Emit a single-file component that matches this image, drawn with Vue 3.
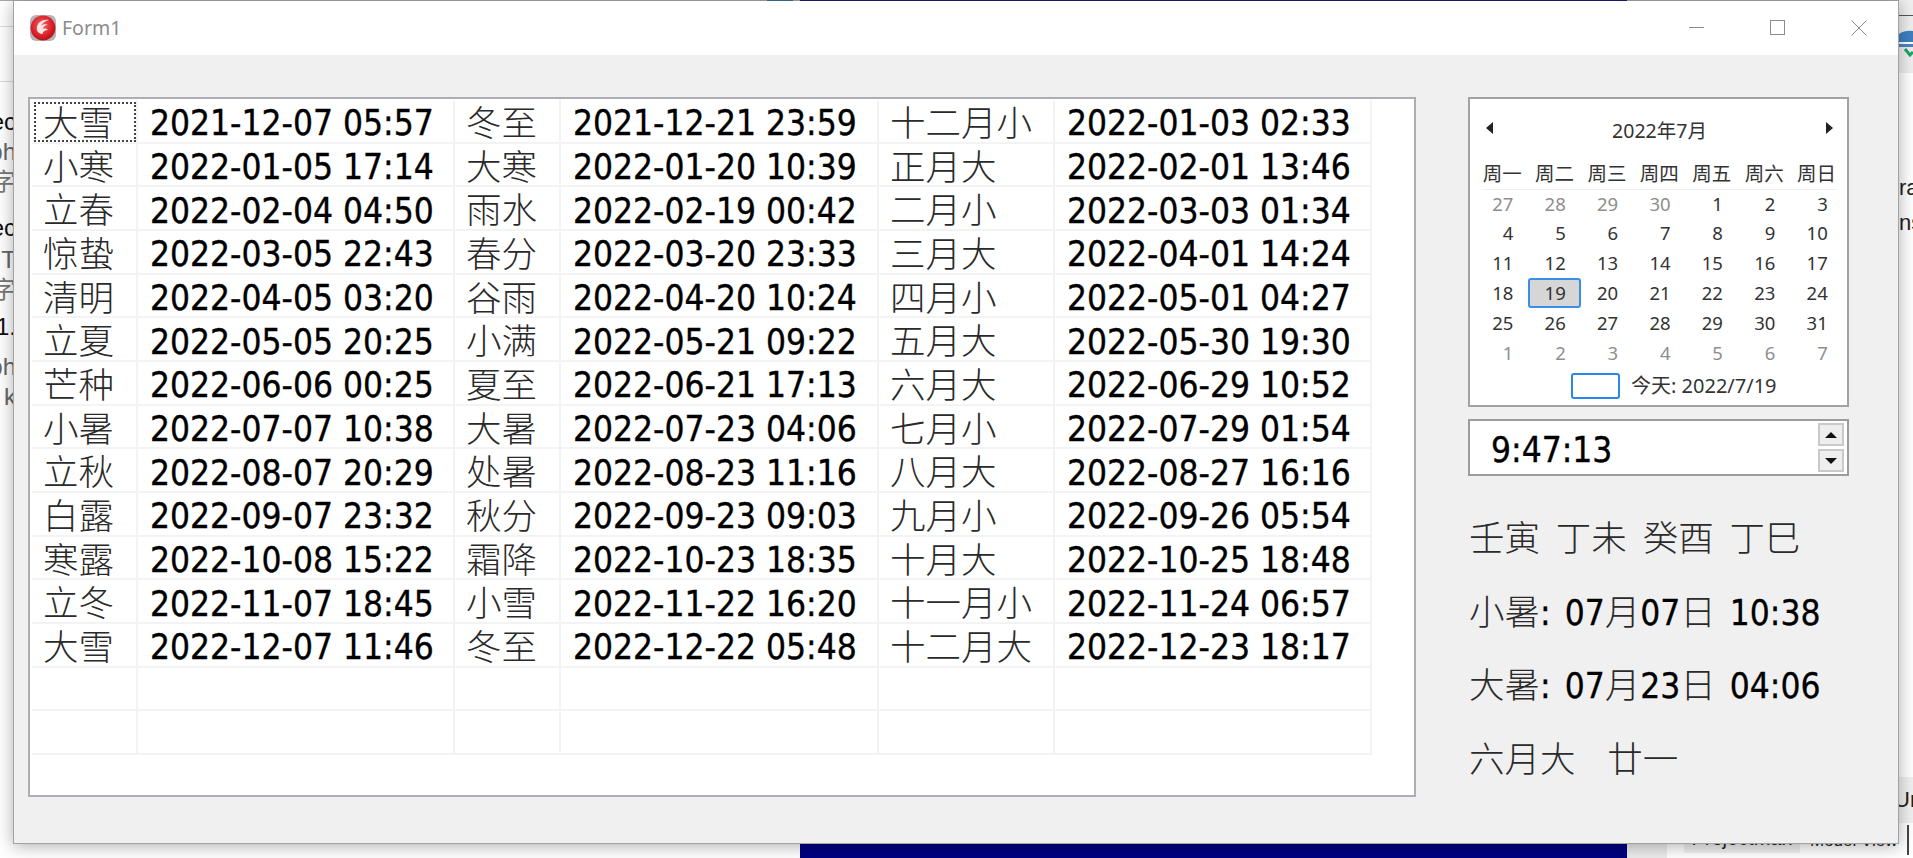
<script setup>
const rows = [
  ['大雪','2021-12-07 05:57','冬至','2021-12-21 23:59','十二月小','2022-01-03 02:33'],
  ['小寒','2022-01-05 17:14','大寒','2022-01-20 10:39','正月大','2022-02-01 13:46'],
  ['立春','2022-02-04 04:50','雨水','2022-02-19 00:42','二月小','2022-03-03 01:34'],
  ['惊蛰','2022-03-05 22:43','春分','2022-03-20 23:33','三月大','2022-04-01 14:24'],
  ['清明','2022-04-05 03:20','谷雨','2022-04-20 10:24','四月小','2022-05-01 04:27'],
  ['立夏','2022-05-05 20:25','小满','2022-05-21 09:22','五月大','2022-05-30 19:30'],
  ['芒种','2022-06-06 00:25','夏至','2022-06-21 17:13','六月大','2022-06-29 10:52'],
  ['小暑','2022-07-07 10:38','大暑','2022-07-23 04:06','七月小','2022-07-29 01:54'],
  ['立秋','2022-08-07 20:29','处暑','2022-08-23 11:16','八月大','2022-08-27 16:16'],
  ['白露','2022-09-07 23:32','秋分','2022-09-23 09:03','九月小','2022-09-26 05:54'],
  ['寒露','2022-10-08 15:22','霜降','2022-10-23 18:35','十月大','2022-10-25 18:48'],
  ['立冬','2022-11-07 18:45','小雪','2022-11-22 16:20','十一月小','2022-11-24 06:57'],
  ['大雪','2022-12-07 11:46','冬至','2022-12-22 05:48','十二月大','2022-12-23 18:17'],
  ['','','','','',''],
  ['','','','','',''],
]
const weekdays = ['周一','周二','周三','周四','周五','周六','周日']
const days = []
for (const d of [27,28,29,30]) days.push({ d, muted: true })
for (let d = 1; d <= 31; d++) days.push({ d, muted: false, sel: d === 19 })
for (let d = 1; d <= 7; d++) days.push({ d, muted: true })
const leftScraps = [
  { t: 'ec', y: 106, c: '#111' }, { t: 'ph', y: 136, c: '#666' }, { t: '字', y: 166, c: '#777' },
  { t: 'ec', y: 212, c: '#111' }, { t: 'NT', y: 244, c: '#666' }, { t: '字', y: 274, c: '#777' },
  { t: '1.', y: 311, c: '#111' }, { t: 'ph', y: 351, c: '#666' }, { t: 'k', y: 381, c: '#666' },
]
</script>

<template>
  <div class="desktop">
    <div class="top-strip">
      <span class="s-gray"></span><span class="s-blue"></span><span class="s-blue"></span><span class="s-gap"></span><span class="s-navy"></span><span class="s-rest"></span>
    </div>
    <div class="hair h1"></div>
    <div class="hair h2"></div>
    <span v-for="(s, i) in leftScraps" :key="i" class="scrap" :style="{ top: s.y + 'px', color: s.c }">{{ s.t }}</span>

    <div class="right-top">
      <svg class="right-icon" width="14" height="30" viewBox="0 0 14 30">
        <path d="M0 4 Q6 0 14 1 V12 H0 Z" fill="#3f7fc1"/>
        <rect x="0" y="12" width="14" height="2" fill="#fff"/>
        <path d="M0 14 H14 V17 H0 Z" fill="#4a86c4"/>
        <path d="M6 19 L11 25 L14 22" fill="none" stroke="#1fa36b" stroke-width="3"/>
      </svg>
    </div>
    <span class="rscrap ra">ra</span>
    <span class="rscrap ns">ns</span>
    <div class="right-bot"><span class="jn">Un</span></div>

    <div class="bottom-strip">
      <span class="b-navy"></span><span class="b-gray"></span><span class="b-proj">Projectman</span><span class="b-model">Model View</span><span class="b-bar"></span>
    </div>

    <div class="window">
      <header class="titlebar">
        <svg class="app-icon" width="26" height="26" viewBox="0 0 26 26">
          <defs>
            <radialGradient id="red" cx="45%" cy="40%" r="60%">
              <stop offset="0" stop-color="#f0686c"/>
              <stop offset="0.7" stop-color="#dc1f2a"/>
              <stop offset="1" stop-color="#b3131c"/>
            </radialGradient>
          </defs>
          <rect x="0" y="0" width="26" height="26" rx="6" fill="#b9b4b4"/>
          <circle cx="13" cy="13" r="12.4" fill="url(#red)"/>
          <path d="M7 12 C8 7 13 4 19 5 C15 6 12 8 11 11 C13 9 16 9 18 10 C15 10 13 12 13 14 C15 13 17 14 18 15 C15 15 13 16 12.5 19 C9 19 6 16 7 12 Z" fill="#fbe6e6"/>
        </svg>
        <span class="title">Form1</span>
        <div class="controls">
          <svg class="ctl" width="16" height="16" viewBox="0 0 16 16"><path d="M0 7.5 H15" stroke="#8c8c8c" fill="none"/></svg>
          <svg class="ctl" width="16" height="16" viewBox="0 0 16 16"><rect x="0.5" y="0.5" width="14" height="14" stroke="#8c8c8c" fill="none"/></svg>
          <svg class="ctl" width="16" height="16" viewBox="0 0 16 16"><path d="M0.5 0.5 L15.5 15.5 M15.5 0.5 L0.5 15.5" stroke="#8c8c8c" fill="none"/></svg>
        </div>
      </header>

      <main class="client">
        <section class="grid-box">
          <div class="grid">
            <template v-for="(r, i) in rows" :key="i">
              <div
                v-for="(c, j) in r"
                :key="j"
                class="cell"
                :class="{ cjk: j % 2 === 0, date: j % 2 === 1, focus: i === 0 && j === 0 }"
              ><span class="cell-text">{{ c }}</span></div>
            </template>
          </div>
        </section>

        <aside class="side">
          <div class="calendar">
            <div class="cal-head">
              <span class="arrow-l"></span>
              <span class="cal-title">2022年7月</span>
              <span class="arrow-r"></span>
            </div>
            <div class="cal-week">
              <span v-for="w in weekdays" :key="w" class="wd">{{ w }}</span>
            </div>
            <div class="cal-days">
              <span
                v-for="(x, i) in days"
                :key="i"
                class="day"
                :class="{ muted: x.muted, sel: x.sel }"
              >{{ x.d }}</span>
            </div>
            <div class="cal-today">
              <span class="today-box"></span>
              <span class="today-text">今天: 2022/7/19</span>
            </div>
          </div>

          <div class="timebox">
            <span class="time">9:47:13</span>
            <div class="spin">
              <button class="spin-btn"><span class="tri-up"></span></button>
              <button class="spin-btn"><span class="tri-down"></span></button>
            </div>
          </div>

          <div class="info">
            <div class="line"><span class="cn">{{ '壬寅 丁未 癸酉 丁巳' }}</span></div>
            <div class="line tight"><span class="cn">小暑</span>: 07<span class="cn">月</span>07<span class="cn">日</span> 10:38</div>
            <div class="line tight"><span class="cn">大暑</span>: 07<span class="cn">月</span>23<span class="cn">日</span> 04:06</div>
            <div class="line"><span class="cn">{{ '六月大  廿一' }}</span></div>
          </div>
        </aside>
      </main>
    </div>
  </div>
</template>

<style>
html, body { margin: 0; padding: 0; overflow: hidden; background: #fff; }
</style>

<style scoped>
.desktop {
  position: relative;
  width: 1913px;
  height: 858px;
  overflow: hidden;
  background: #fff;
  font-family: "DejaVu Sans Condensed", "DejaVu Sans", "Noto Sans CJK SC", sans-serif;
  font-stretch: condensed;
}
.top-strip { position: absolute; left: 0; top: 0; width: 1913px; height: 1px; display: flex; }
.s-gray { width: 767px; background: #a8a8a8; }
.s-blue { width: 13px; background: #3d6f9e; }
.s-gap { width: 7px; background: #aaa; }
.s-navy { width: 827px; background: #1c1c78; }
.s-rest { flex: 1; background: #a8a8a8; }
.hair { position: absolute; left: 0; width: 13px; height: 1px; background: #dcdcdc; }
.h1 { top: 26px; }
.h2 { top: 81px; }
.scrap {
  position: absolute;
  right: 1897px;
  font: 24px/32px "Liberation Sans", "Noto Sans CJK SC", sans-serif;
  white-space: nowrap;
}
.right-top { position: absolute; left: 1899px; top: 0; width: 14px; height: 73px; background: #efefef; }
.right-top::before { content: ""; position: absolute; left: 0; right: 0; top: 15px; height: 1px; background: #555; }
.right-icon { position: absolute; left: 0; top: 30px; }
.rscrap {
  position: absolute;
  left: 1899px;
  font: 22px/30px "Liberation Sans", sans-serif;
  color: #222;
  width: 14px;
  overflow: hidden;
}
.ra { top: 173px; }
.ns { top: 208px; }
.right-bot { position: absolute; left: 1899px; top: 777px; width: 14px; height: 46px; background: #f0f0f0; overflow: hidden; }
.jn { font: 22px/46px "Liberation Sans", sans-serif; color: #222; margin-left: -5px; display: block; }
.bottom-strip { position: absolute; left: 0; top: 823px; width: 1913px; height: 35px; }
.b-navy { position: absolute; left: 800px; top: 21px; width: 827px; height: 14px; background: #000080; }
.b-gray { position: absolute; left: 1627px; top: 21px; width: 40px; height: 14px; background: #ececec; }
.b-proj {
  position: absolute; left: 1684px; top: 0; width: 116px; height: 30px;
  background: #f0f0f0; font: 20px/31px "Liberation Sans", sans-serif; color: #222; text-align: center; overflow: hidden;
}
.b-model { position: absolute; left: 1810px; top: 0; font: 17px/36px "Liberation Sans", sans-serif; color: #222; white-space: nowrap; }
.b-bar { position: absolute; left: 1907px; top: 2px; width: 2px; height: 30px; background: #444; }

.window {
  position: absolute;
  left: 13px;
  top: 1px;
  width: 1886px;
  height: 843px;
  box-sizing: border-box;
  border: 1px solid #a3a3a3;
  border-top: 0;
  background: #f0f0f0;
  box-shadow: 0 2px 16px rgba(0, 0, 0, 0.32);
  display: flex;
  flex-direction: column;
}
.titlebar {
  height: 54px;
  flex: none;
  background: #fff;
  display: flex;
  align-items: center;
  padding-left: 16px;
}
.app-icon { flex: none; }
.title {
  margin-left: 6px;
  font: 19.5px/1 "Noto Sans", sans-serif;
  color: #8b8b8b;
}
.controls { margin-left: auto; display: flex; gap: 65px; padding-right: 31px; }
.ctl { display: block; }

.client {
  flex: 1;
  display: flex;
  padding: 42px 0 0 14px;
  gap: 52px;
  min-height: 0;
}
.grid-box {
  width: 1388px;
  height: 700px;
  box-sizing: border-box;
  border: 2px solid #adadb3;
  background: #fff;
  padding: 1px 0 0 2px;
  flex: none;
}
.grid {
  display: grid;
  grid-template-columns: 106px 317px 106px 318px 176px 317px;
  grid-auto-rows: 43.67px;
  width: 1340px;
}
.cell {
  box-sizing: border-box;
  border-right: 2px solid #f3f3f3;
  border-bottom: 2px solid #f3f3f3;
  white-space: nowrap;
  overflow: hidden;
  display: flex;
  align-items: center;
  color: #000;
}
.cell-text { display: block; line-height: 1; }
.cjk {
  padding-left: 11px;
  font: 300 35.5px/1 "Noto Sans CJK SC", sans-serif;
  color: #2a2a2a;
}
.date {
  padding-left: 12px;
  font-size: 35px;
  line-height: 1;
  font-family: "DejaVu Sans Condensed", "DejaVu Sans", sans-serif;
  -webkit-text-stroke: 0.35px #000;
}
.date .cell-text { padding-top: 6px; }
.focus { outline: 2px dotted #444; outline-offset: -4px; }

.side { width: 381px; flex: none; }
.calendar {
  box-sizing: border-box;
  height: 310px;
  border: 2px solid #a2a2a2;
  background: #fff;
  color: #333;
  font-family: "Noto Sans", "Noto Sans CJK SC", sans-serif;
  font-stretch: normal;
  font-size: 18.5px;
  padding: 0 4px 0 6px;
  display: flex;
  flex-direction: column;
}
.cal-head {
  box-sizing: border-box;
  height: 61px;
  flex: none;
  display: flex;
  align-items: center;
  justify-content: space-between;
  padding: 2px 10px 0;
}
.arrow-l, .arrow-r { width: 0; height: 0; border-top: 6px solid transparent; border-bottom: 6px solid transparent; margin-top: -6px; }
.arrow-l { border-right: 7px solid #222; }
.arrow-r { border-left: 7px solid #222; }
.cal-title { line-height: 1; font-size: 19.5px; }
.cal-week {
  display: grid;
  grid-template-columns: repeat(7, 52.4px);
  height: 27px;
  align-items: center;
  position: relative;
  padding-bottom: 2px;
}
.cal-week::after {
  content: "";
  position: absolute;
  left: 6px;
  right: 6px;
  bottom: -1px;
  height: 1px;
  background: #efefef;
}
.wd { text-align: center; font-size: 19.5px; line-height: 1; }
.cal-days {
  display: grid;
  grid-template-columns: repeat(7, 52.4px);
  grid-auto-rows: 29.8px;
}
.day {
  box-sizing: border-box;
  display: flex;
  align-items: center;
  justify-content: flex-end;
  padding-right: 15px;
  line-height: 1;
}
.muted { color: #8e8e8e; }
.sel {
  background: #d6d6d6;
  border: 2px solid #3a8ee6;
  border-radius: 3px;
  padding-right: 13px;
}
.cal-today {
  display: flex;
  align-items: center;
  padding-left: 95px;
  gap: 11px;
  height: 26px;
  margin-top: 5px;
}
.today-box {
  box-sizing: border-box;
  width: 49px;
  height: 26px;
  border: 2px solid #2a86e8;
  border-radius: 3px;
}
.today-text { line-height: 1; font-size: 20px; }

.timebox {
  box-sizing: border-box;
  height: 57px;
  margin-top: 12px;
  border: 2px solid #9c9c9c;
  background: #fff;
  display: flex;
  align-items: center;
  padding-left: 21px;
  padding-right: 3px;
}
.time { font-size: 35px; line-height: 1; color: #000; padding-top: 5px; -webkit-text-stroke: 0.35px #000; }
.spin { margin-left: auto; display: flex; flex-direction: column; gap: 3px; }
.spin-btn {
  box-sizing: border-box;
  width: 26px;
  height: 23px;
  margin: 0;
  padding: 0;
  border: 2px solid #c9c9c9;
  background: #eee;
  display: flex;
  align-items: center;
  justify-content: center;
}
.tri-up, .tri-down { width: 0; height: 0; border-left: 6px solid transparent; border-right: 6px solid transparent; }
.tri-up { border-bottom: 6px solid #111; }
.tri-down { border-top: 6px solid #111; }

.info { margin-top: 23px; padding-left: 1px; }
.line {
  height: 73.6px;
  line-height: 73.6px;
  font-size: 35px;
  color: #000;
  white-space: pre;
  -webkit-text-stroke: 0.3px #000;
}
.tight { word-spacing: 4px; }
.cn {
  font: 300 35.5px/73.6px "Noto Sans CJK SC", sans-serif;
  color: #2a2a2a;
  word-spacing: 8px;
  -webkit-text-stroke: 0;
}
</style>
